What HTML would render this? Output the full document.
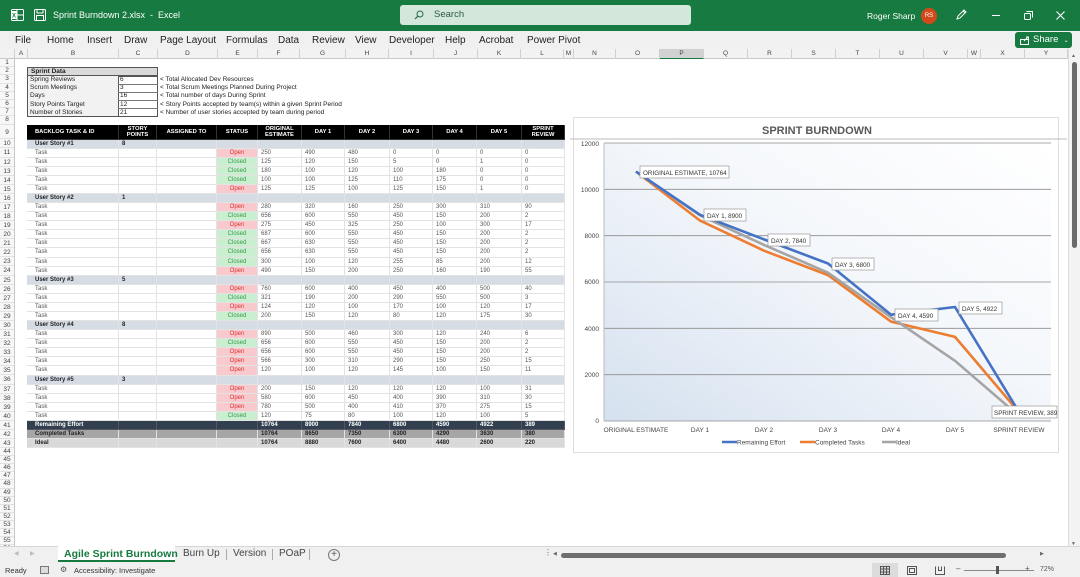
<!DOCTYPE html>
<html><head><meta charset="utf-8"><style>
*{box-sizing:border-box;margin:0;padding:0}
body{width:1080px;height:577px;overflow:hidden;background:#fff;font-family:"Liberation Sans",sans-serif;position:relative}
.a{position:absolute;white-space:nowrap}
#title{left:0;top:0;width:1080px;height:31px;background:#177a40}
#menu{left:0;top:31px;width:1080px;height:18px;background:#f0f0f0}
#menu span{position:absolute;top:4px;font-size:10px;color:#222}
#colh{left:0;top:49px;width:1068px;height:10px;background:#f2f2f2;border-bottom:1px solid #c8c8c8}
#colh div{position:absolute;top:0;height:10px;font-size:6.5px;line-height:10px;text-align:center;color:#444;border-right:1px solid #d0d0d0}
#rowh{left:0;top:59px;width:15px;background:#f7f7f7;border-right:1px solid #c8c8c8;height:489px;overflow:hidden}
#rowh div{font-size:6.5px;color:#444;text-align:center;border-bottom:1px solid #e2e2e2;height:9.09px;line-height:9px}
#rowh .s{height:8.2px;line-height:8px}
#rowh .n{height:14.9px;line-height:15px}
#rowh .t{height:8.1px;line-height:8px}
#tbl{left:27px;top:125px;width:538px}
.r{display:flex;height:9.09px;font-size:6px;color:#555;line-height:9px}
.r div{border-right:1px solid #e3e3e3;border-bottom:1px solid #e3e3e3;padding-left:3px;overflow:hidden}
.r div:nth-child(1){width:92px;padding-left:8px}.r div:nth-child(2){width:38px}.r div:nth-child(3){width:60px}
.r div:nth-child(4){width:41px;text-align:center;padding-left:0}.r div:nth-child(5){width:44px}.r div:nth-child(6){width:43px}
.r div:nth-child(7){width:45px}.r div:nth-child(8){width:43px}.r div:nth-child(9){width:44px}.r div:nth-child(10){width:45px}.r div:nth-child(11){width:43px}
.h{height:14.5px;background:#000;color:#fff;font-weight:bold;font-size:5.8px;line-height:6px}
.h div{display:flex;align-items:center;justify-content:center;text-align:center;border-color:#333;padding:0!important}
.h div:nth-child(1){justify-content:flex-start;padding-left:8px!important}
.u{background:#d6dce4;font-weight:bold;color:#222}
.o{background:#f8c9cd;color:#d33}
.c{background:#c9efd0;color:#3a9a4c}
.re{background:#323f4f;color:#fff;font-weight:bold}
.re div{border-color:#556}
.ct{background:#a6a6a6;color:#222;font-weight:bold}
.id{background:#d9d9d9;color:#222;font-weight:bold}
.sd{font-size:6.5px;color:#222;line-height:8.2px}
</style></head><body>

<div id="title" class="a">
<svg class="a" style="left:11px;top:9px" width="13" height="12" viewBox="0 0 13 12"><rect x="0.5" y="0.5" width="12" height="11" rx="1" fill="none" stroke="#fff"/><line x1="6" y1="1" x2="6" y2="11" stroke="#fff"/><line x1="1" y1="6" x2="12" y2="6" stroke="#fff"/><rect x="0" y="2" width="6" height="8" fill="#fff"/><text x="1" y="8.5" font-size="6" fill="#177a40" font-weight="bold">X</text></svg>
<svg class="a" style="left:34px;top:9px" width="12" height="12" viewBox="0 0 12 12"><rect x="0.5" y="0.5" width="11" height="11" rx="1" fill="none" stroke="#fff"/><rect x="3" y="0.5" width="6" height="3.5" fill="none" stroke="#fff"/><rect x="2.5" y="6.5" width="7" height="5" fill="none" stroke="#fff"/></svg>
<span class="a" style="left:53px;top:10px;font-size:9px;color:#fff">Sprint Burndown 2.xlsx&nbsp; - &nbsp;Excel</span>
<div class="a" style="left:400px;top:5px;width:291px;height:20px;background:#d3e8da;border-radius:3px"></div>
<svg class="a" style="left:414px;top:10px" width="10" height="10" viewBox="0 0 10 10"><circle cx="6" cy="4" r="3" fill="none" stroke="#2a6a44" stroke-width="1"/><line x1="4" y1="6" x2="1" y2="9" stroke="#2a6a44" stroke-width="1.2"/></svg>
<span class="a" style="left:434px;top:9px;font-size:9.5px;color:#2c5a3e">Search</span>
<span class="a" style="left:867px;top:11px;font-size:8.5px;color:#fff">Roger Sharp</span>
<div class="a" style="left:921px;top:8px;width:16px;height:16px;border-radius:50%;background:#d24a1c;color:#fff;font-size:6px;line-height:16px;text-align:center">RS</div>
<svg class="a" style="left:955px;top:9px" width="12" height="12" viewBox="0 0 12 12"><path d="M2 10 L3 7 L9 1 L11 3 L5 9 Z M8 2 L10 4" fill="none" stroke="#fff" stroke-width="1"/></svg>
<div class="a" style="left:992px;top:15px;width:8px;height:1px;background:#fff"></div>
<svg class="a" style="left:1024px;top:11px" width="9" height="9" viewBox="0 0 9 9"><rect x="0.5" y="2.5" width="6" height="6" rx="1" fill="none" stroke="#fff"/><path d="M2.5 0.5 H8.5 V6.5" fill="none" stroke="#fff"/></svg>
<svg class="a" style="left:1056px;top:11px" width="9" height="9" viewBox="0 0 9 9"><path d="M0.5 0.5 L8.5 8.5 M8.5 0.5 L0.5 8.5" stroke="#fff" stroke-width="1.1"/></svg>
</div>

<div id="menu" class="a">
<span style="left:15px">File</span><span style="left:47px">Home</span><span style="left:87px">Insert</span><span style="left:124px">Draw</span><span style="left:160px">Page Layout</span><span style="left:226px">Formulas</span><span style="left:278px">Data</span><span style="left:312px">Review</span><span style="left:355px">View</span><span style="left:389px">Developer</span><span style="left:445px">Help</span><span style="left:479px">Acrobat</span><span style="left:527px">Power Pivot</span>
<div class="a" style="left:1015px;top:1px;width:57px;height:16px;background:#177a40;border-radius:3px;color:#fff;font-size:9.5px;line-height:16px;padding-left:18px">Share &nbsp;<span style="position:static;font-size:6px;color:#fff">&#8964;</span></div>
<svg class="a" style="left:1020px;top:5px" width="10" height="9" viewBox="0 0 10 9"><rect x="0.5" y="3.5" width="8" height="5" fill="none" stroke="#fff"/><path d="M4 5 L8 1 M6 1 H8.5 V3" fill="none" stroke="#fff"/></svg>
</div>

<div id="colh" class="a">
<div style="left:0;width:15px"></div><div style="left:15px;width:13px">A</div><div style="left:28px;width:91px">B</div><div style="left:119px;width:39px">C</div><div style="left:158px;width:60px">D</div><div style="left:218px;width:40px">E</div><div style="left:258px;width:42px">F</div><div style="left:300px;width:46px">G</div><div style="left:346px;width:43px">H</div><div style="left:389px;width:45px">I</div><div style="left:434px;width:44px">J</div><div style="left:478px;width:43px">K</div><div style="left:521px;width:43px">L</div><div style="left:564px;width:10px">M</div><div style="left:574px;width:42px">N</div><div style="left:616px;width:44px">O</div><div style="left:660px;width:44px;background:#d2d2d2;border-bottom:1px solid #177a40">P</div><div style="left:704px;width:44px">Q</div><div style="left:748px;width:44px">R</div><div style="left:792px;width:44px">S</div><div style="left:836px;width:44px">T</div><div style="left:880px;width:44px">U</div><div style="left:924px;width:44px">V</div><div style="left:968px;width:13px">W</div><div style="left:981px;width:44px">X</div><div style="left:1025px;width:43px">Y</div>
</div>

<div id="rowh" class="a">
<div class="s">1</div><div class="s">2</div><div class="s">3</div><div class="s">4</div><div class="s">5</div><div class="s">6</div><div class="s">7</div><div class="s">8</div><div class="n">9</div>
<div>10</div><div>11</div><div>12</div><div>13</div><div>14</div><div>15</div><div>16</div><div>17</div><div>18</div><div>19</div><div>20</div><div>21</div><div>22</div><div>23</div><div>24</div><div>25</div><div>26</div><div>27</div><div>28</div><div>29</div><div>30</div><div>31</div><div>32</div><div>33</div><div>34</div><div>35</div><div>36</div><div>37</div><div>38</div><div>39</div><div>40</div><div>41</div><div>42</div><div>43</div>
<div class="t">44</div><div class="t">45</div><div class="t">46</div><div class="t">47</div><div class="t">48</div><div class="t">49</div><div class="t">50</div><div class="t">51</div><div class="t">52</div><div class="t">53</div><div class="t">54</div><div class="t">55</div><div class="t">56</div>
</div>

<!-- Sprint data -->
<div class="a" style="left:27px;top:67px;width:131px;height:50px;border:1px solid #555;background:#f2f2f2"></div>
<div class="a sd" style="left:27px;top:67px;width:131px;height:9px;background:#d9d9d9;border:1px solid #555;font-weight:bold;padding-left:3px">Sprint Data</div>
<div class="a sd" style="left:30px;top:76px">Spring Reviews<br>Scrum Meetings<br>Days<br>Story Points Target<br>Number of Stories</div>
<div class="a" style="left:118px;top:76px;width:40px;height:41px;background:#fff;border:1px solid #555"></div>
<div class="a sd" style="left:120px;top:76px">6<br>3<br>16<br>12<br>21</div>
<div class="a" style="left:118px;top:84px;width:40px;border-top:1px solid #777"></div>
<div class="a" style="left:118px;top:92px;width:40px;border-top:1px solid #777"></div>
<div class="a" style="left:118px;top:100px;width:40px;border-top:1px solid #777"></div>
<div class="a" style="left:118px;top:108px;width:40px;border-top:1px solid #777"></div>
<div class="a sd" style="left:160px;top:76px">&lt; Total Allocated Dev Resources<br>&lt; Total Scrum Meetings Planned During Project<br>&lt; Total number of days During Sprint<br>&lt; Story Points accepted by team(s) within a given Sprint Period<br>&lt; Number of user stories accepted by team during period</div>

<div id="tbl" class="a">
<div class="r h"><div>BACKLOG TASK &amp; ID</div><div>STORY<br>POINTS</div><div>ASSIGNED TO</div><div>STATUS</div><div>ORIGINAL<br>ESTIMATE</div><div>DAY 1</div><div>DAY 2</div><div>DAY 3</div><div>DAY 4</div><div>DAY 5</div><div>SPRINT<br>REVIEW</div></div>
<div class="r u"><div>User Story #1</div><div>8</div><div></div><div></div><div></div><div></div><div></div><div></div><div></div><div></div><div></div></div>
<div class="r"><div>Task</div><div></div><div></div><div class="o">Open</div><div>250</div><div>490</div><div>480</div><div>0</div><div>0</div><div>0</div><div>0</div></div>
<div class="r"><div>Task</div><div></div><div></div><div class="c">Closed</div><div>125</div><div>120</div><div>150</div><div>5</div><div>0</div><div>1</div><div>0</div></div>
<div class="r"><div>Task</div><div></div><div></div><div class="c">Closed</div><div>180</div><div>100</div><div>120</div><div>100</div><div>180</div><div>0</div><div>0</div></div>
<div class="r"><div>Task</div><div></div><div></div><div class="c">Closed</div><div>100</div><div>100</div><div>125</div><div>110</div><div>175</div><div>0</div><div>0</div></div>
<div class="r"><div>Task</div><div></div><div></div><div class="o">Open</div><div>125</div><div>125</div><div>100</div><div>125</div><div>150</div><div>1</div><div>0</div></div>
<div class="r u"><div>User Story #2</div><div>1</div><div></div><div></div><div></div><div></div><div></div><div></div><div></div><div></div><div></div></div>
<div class="r"><div>Task</div><div></div><div></div><div class="o">Open</div><div>280</div><div>320</div><div>160</div><div>250</div><div>300</div><div>310</div><div>90</div></div>
<div class="r"><div>Task</div><div></div><div></div><div class="c">Closed</div><div>656</div><div>600</div><div>550</div><div>450</div><div>150</div><div>200</div><div>2</div></div>
<div class="r"><div>Task</div><div></div><div></div><div class="o">Open</div><div>275</div><div>450</div><div>325</div><div>250</div><div>100</div><div>300</div><div>17</div></div>
<div class="r"><div>Task</div><div></div><div></div><div class="c">Closed</div><div>687</div><div>600</div><div>550</div><div>450</div><div>150</div><div>200</div><div>2</div></div>
<div class="r"><div>Task</div><div></div><div></div><div class="c">Closed</div><div>667</div><div>630</div><div>550</div><div>450</div><div>150</div><div>200</div><div>2</div></div>
<div class="r"><div>Task</div><div></div><div></div><div class="c">Closed</div><div>656</div><div>630</div><div>550</div><div>450</div><div>150</div><div>200</div><div>2</div></div>
<div class="r"><div>Task</div><div></div><div></div><div class="c">Closed</div><div>300</div><div>100</div><div>120</div><div>255</div><div>85</div><div>200</div><div>12</div></div>
<div class="r"><div>Task</div><div></div><div></div><div class="o">Open</div><div>490</div><div>150</div><div>200</div><div>250</div><div>160</div><div>190</div><div>55</div></div>
<div class="r u"><div>User Story #3</div><div>5</div><div></div><div></div><div></div><div></div><div></div><div></div><div></div><div></div><div></div></div>
<div class="r"><div>Task</div><div></div><div></div><div class="o">Open</div><div>760</div><div>600</div><div>400</div><div>450</div><div>400</div><div>500</div><div>40</div></div>
<div class="r"><div>Task</div><div></div><div></div><div class="c">Closed</div><div>321</div><div>190</div><div>200</div><div>290</div><div>550</div><div>500</div><div>3</div></div>
<div class="r"><div>Task</div><div></div><div></div><div class="o">Open</div><div>124</div><div>120</div><div>100</div><div>170</div><div>100</div><div>120</div><div>17</div></div>
<div class="r"><div>Task</div><div></div><div></div><div class="c">Closed</div><div>200</div><div>150</div><div>120</div><div>80</div><div>120</div><div>175</div><div>30</div></div>
<div class="r u"><div>User Story #4</div><div>8</div><div></div><div></div><div></div><div></div><div></div><div></div><div></div><div></div><div></div></div>
<div class="r"><div>Task</div><div></div><div></div><div class="o">Open</div><div>890</div><div>500</div><div>460</div><div>300</div><div>120</div><div>240</div><div>6</div></div>
<div class="r"><div>Task</div><div></div><div></div><div class="c">Closed</div><div>656</div><div>600</div><div>550</div><div>450</div><div>150</div><div>200</div><div>2</div></div>
<div class="r"><div>Task</div><div></div><div></div><div class="o">Open</div><div>656</div><div>600</div><div>550</div><div>450</div><div>150</div><div>200</div><div>2</div></div>
<div class="r"><div>Task</div><div></div><div></div><div class="o">Open</div><div>566</div><div>300</div><div>310</div><div>290</div><div>150</div><div>250</div><div>15</div></div>
<div class="r"><div>Task</div><div></div><div></div><div class="o">Open</div><div>120</div><div>100</div><div>120</div><div>145</div><div>100</div><div>150</div><div>11</div></div>
<div class="r u"><div>User Story #5</div><div>3</div><div></div><div></div><div></div><div></div><div></div><div></div><div></div><div></div><div></div></div>
<div class="r"><div>Task</div><div></div><div></div><div class="o">Open</div><div>200</div><div>150</div><div>120</div><div>120</div><div>120</div><div>100</div><div>31</div></div>
<div class="r"><div>Task</div><div></div><div></div><div class="o">Open</div><div>580</div><div>600</div><div>450</div><div>400</div><div>390</div><div>310</div><div>30</div></div>
<div class="r"><div>Task</div><div></div><div></div><div class="o">Open</div><div>780</div><div>500</div><div>400</div><div>410</div><div>370</div><div>275</div><div>15</div></div>
<div class="r"><div>Task</div><div></div><div></div><div class="c">Closed</div><div>120</div><div>75</div><div>80</div><div>100</div><div>120</div><div>100</div><div>5</div></div>
<div class="r re"><div>Remaining Effort</div><div></div><div></div><div></div><div>10764</div><div>8900</div><div>7840</div><div>6800</div><div>4590</div><div>4922</div><div>389</div></div>
<div class="r ct"><div>Completed Tasks</div><div></div><div></div><div></div><div>10764</div><div>8650</div><div>7350</div><div>6300</div><div>4290</div><div>3630</div><div>380</div></div>
<div class="r id"><div>Ideal</div><div></div><div></div><div></div><div>10764</div><div>8880</div><div>7600</div><div>6400</div><div>4480</div><div>2600</div><div>220</div></div>
</div>

<!-- Chart -->
<svg class="a" style="left:570px;top:115px" width="500" height="345" viewBox="0 0 500 345" font-family="Liberation Sans, sans-serif">
<defs><linearGradient id="g" x1="0" y1="1" x2="1" y2="0"><stop offset="0" stop-color="#d5e1ef"/><stop offset="0.55" stop-color="#f4f7fb"/><stop offset="1" stop-color="#ffffff"/></linearGradient></defs>
<rect x="3.5" y="2.5" width="485" height="335" fill="#fff" stroke="#dedede"/>
<text x="247" y="19" font-size="11" font-weight="bold" fill="#595959" text-anchor="middle">SPRINT BURNDOWN</text>
<line x1="0" y1="24" x2="497" y2="24" stroke="#bbb"/>
<rect x="34" y="28" width="447" height="278" fill="url(#g)"/>
<g stroke="#8c8c8c" stroke-width="0.8"><line x1="34" y1="28" x2="481" y2="28"/><line x1="34" y1="74.3" x2="481" y2="74.3"/><line x1="34" y1="120.7" x2="481" y2="120.7"/><line x1="34" y1="167" x2="481" y2="167"/><line x1="34" y1="213.3" x2="481" y2="213.3"/><line x1="34" y1="259.7" x2="481" y2="259.7"/><line x1="34" y1="306" x2="481" y2="306"/></g>
<line x1="34" y1="28" x2="34" y2="306" stroke="#bbb"/>
<g font-size="6.5" fill="#444" text-anchor="end"><text x="29" y="31">12000</text><text x="29" y="77">10000</text><text x="29" y="123">8000</text><text x="29" y="169">6000</text><text x="29" y="216">4000</text><text x="29" y="262">2000</text><text x="29" y="308">0</text></g>
<g font-size="6.5" fill="#444" text-anchor="middle"><text x="66" y="317">ORIGINAL ESTIMATE</text><text x="130" y="317">DAY 1</text><text x="194" y="317">DAY 2</text><text x="258" y="317">DAY 3</text><text x="321" y="317">DAY 4</text><text x="385" y="317">DAY 5</text><text x="449" y="317">SPRINT REVIEW</text></g>
<g fill="none" stroke-width="2.6" stroke-linejoin="round">
<polyline stroke="#ed7d31" points="66,56.6 130,105.6 194,135.7 258,160.1 321,206.6 385,221.9 449,297.2"/>
<polyline stroke="#a5a5a5" points="66,56.6 130,100.3 194,129.9 258,157.7 321,202.2 385,245.8 449,300.9"/>
<polyline stroke="#4472c4" points="66,56.6 130,99.8 194,124.4 258,148.5 321,199.7 385,192 449,297"/>
</g>
<g font-size="6.3" fill="#333">
<rect x="70" y="51" width="89" height="12" fill="#fff" stroke="#999" stroke-width="0.7"/><text x="73" y="60">ORIGINAL ESTIMATE, 10764</text>
<rect x="134" y="94" width="42" height="12" fill="#fff" stroke="#999" stroke-width="0.7"/><text x="137" y="103">DAY 1, 8900</text>
<rect x="198" y="119" width="42" height="12" fill="#fff" stroke="#999" stroke-width="0.7"/><text x="201" y="128">DAY 2, 7840</text>
<rect x="262" y="143" width="42" height="12" fill="#fff" stroke="#999" stroke-width="0.7"/><text x="265" y="152">DAY 3, 6800</text>
<rect x="325" y="194" width="43" height="12" fill="#fff" stroke="#999" stroke-width="0.7"/><text x="328" y="203">DAY 4, 4590</text>
<rect x="389" y="187" width="43" height="12" fill="#fff" stroke="#999" stroke-width="0.7"/><text x="392" y="196">DAY 5, 4922</text>
<rect x="422" y="291" width="65" height="12" fill="#fff" stroke="#999" stroke-width="0.7"/><text x="424" y="300">SPRINT REVIEW, 389</text>
</g>
<g font-size="6.5" fill="#444">
<line x1="152" y1="327" x2="167" y2="327" stroke="#4472c4" stroke-width="2.5"/><text x="167" y="329.5">Remaining Effort</text>
<line x1="230" y1="327" x2="245" y2="327" stroke="#ed7d31" stroke-width="2.5"/><text x="245" y="329.5">Completed Tasks</text>
<line x1="312" y1="327" x2="326" y2="327" stroke="#a5a5a5" stroke-width="2.5"/><text x="326" y="329.5">Ideal</text>
</g>
</svg>

<!-- vertical scrollbar -->
<div class="a" style="left:1068px;top:49px;width:12px;height:499px;background:#f3f3f3;border-left:1px solid #ddd"></div>
<div class="a" style="left:1072px;top:62px;width:5px;height:186px;background:#6a6a6a;border-radius:3px"></div>
<div class="a" style="left:1071px;top:53px;font-size:5px;color:#666">&#9650;</div>
<div class="a" style="left:1071px;top:541px;font-size:5px;color:#666">&#9660;</div>

<!-- tab bar -->
<div class="a" style="left:0;top:546px;width:1080px;height:17px;background:#f0f0f0;border-top:1px solid #d6d6d6"></div>
<span class="a" style="left:14px;top:550px;font-size:6px;color:#bbb">&#9664;</span>
<span class="a" style="left:30px;top:550px;font-size:6px;color:#bbb">&#9654;</span>
<div class="a" style="left:58px;top:546px;width:117px;height:16px;background:#fff;border-bottom:2px solid #177a40"></div>
<span class="a" style="left:64px;top:548px;font-size:10.5px;font-weight:bold;color:#177a40">Agile Sprint Burndown</span>
<span class="a" style="left:183px;top:548px;font-size:10px;color:#444">Burn Up</span>
<div class="a" style="left:226px;top:549px;width:1px;height:11px;background:#aaa"></div>
<span class="a" style="left:233px;top:548px;font-size:10px;color:#444">Version</span>
<div class="a" style="left:272px;top:549px;width:1px;height:11px;background:#aaa"></div>
<span class="a" style="left:279px;top:548px;font-size:10px;color:#444">POaP</span>
<div class="a" style="left:309px;top:549px;width:1px;height:11px;background:#aaa"></div>
<div class="a" style="left:328px;top:549px;width:12px;height:12px;border:1px solid #777;border-radius:50%;font-size:10px;line-height:10px;text-align:center;color:#555">+</div>
<span class="a" style="left:544px;top:548px;font-size:8px;color:#666">&#8942;</span>
<span class="a" style="left:553px;top:551px;font-size:5px;color:#666">&#9664;</span>
<div class="a" style="left:561px;top:553px;width:445px;height:5px;background:#6e6e6e;border-radius:3px"></div>
<span class="a" style="left:1040px;top:551px;font-size:5px;color:#666">&#9654;</span>

<!-- status bar -->
<div class="a" style="left:0;top:563px;width:1080px;height:14px;background:#f0f0f0"></div>
<span class="a" style="left:5px;top:566px;font-size:7.5px;color:#333">Ready</span>
<div class="a" style="left:40px;top:566px;width:9px;height:8px;border:1px solid #777;background:#ddd"></div>
<span class="a" style="left:60px;top:565px;font-size:8px;color:#555">&#9881;</span>
<span class="a" style="left:74px;top:566px;font-size:7.5px;color:#333">Accessibility: Investigate</span>
<div class="a" style="left:872px;top:563px;width:26px;height:14px;background:#dcdcdc"></div>
<svg class="a" style="left:880px;top:566px" width="10" height="9" viewBox="0 0 10 9"><rect x="0.5" y="0.5" width="9" height="8" fill="none" stroke="#555"/><path d="M3.5 0.5 V8.5 M6.5 0.5 V8.5 M0.5 3 H9.5 M0.5 6 H9.5" stroke="#555"/></svg>
<svg class="a" style="left:907px;top:566px" width="10" height="9" viewBox="0 0 10 9"><rect x="0.5" y="0.5" width="9" height="8" fill="none" stroke="#555"/><rect x="2.5" y="2.5" width="5" height="4" fill="none" stroke="#555"/></svg>
<svg class="a" style="left:935px;top:566px" width="10" height="9" viewBox="0 0 10 9"><path d="M0.5 0.5 V8.5 H9.5 V0.5 M3.5 0.5 V4.5 H6.5 V0.5" fill="none" stroke="#555"/></svg>
<span class="a" style="left:956px;top:564px;font-size:8px;color:#555">&#8211;</span>
<div class="a" style="left:964px;top:570px;width:70px;height:1px;background:#888"></div>
<div class="a" style="left:996px;top:566px;width:3px;height:8px;background:#555"></div>
<span class="a" style="left:1025px;top:564px;font-size:8px;color:#555">+</span>
<span class="a" style="left:1040px;top:566px;font-size:7px;color:#555">72%</span>
</body></html>
